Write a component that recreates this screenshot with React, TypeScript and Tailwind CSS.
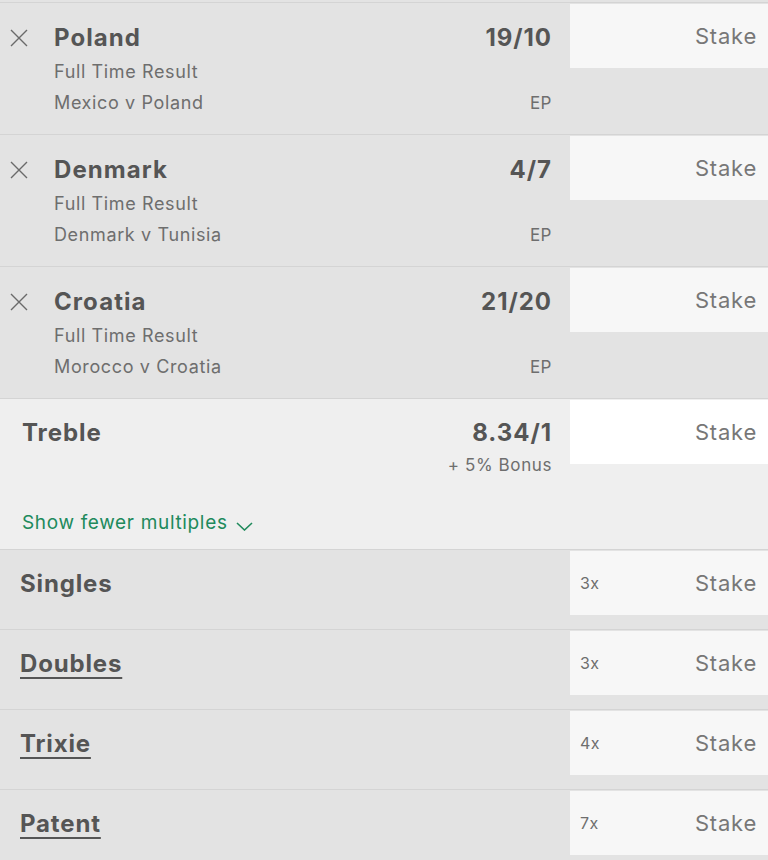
import React from "react";

const font = { fontFamily: "Inter, 'Noto Sans', sans-serif" };

function XIcon() {
  return (
    <svg width="18" height="18" viewBox="0 0 18 18" className="block">
      <path d="M1 1 L17 17 M17 1 L1 17" stroke="#6a6a6a" strokeWidth="1.4" fill="none" />
    </svg>
  );
}

function Chevron() {
  return (
    <svg width="17" height="9" viewBox="0 0 17 9" className="inline-block ml-[8px] mt-[6px]">
      <path d="M1 1 L8.5 8 L16 1" stroke="#208a5c" strokeWidth="1.6" fill="none" />
    </svg>
  );
}

const selections = [
  { team: "Poland", odds: "19/10", match: "Mexico v Poland" },
  { team: "Denmark", odds: "4/7", match: "Denmark v Tunisia" },
  { team: "Croatia", odds: "21/20", match: "Morocco v Croatia" },
];

const multiples = [
  { name: "Singles", count: "3x", underline: false },
  { name: "Doubles", count: "3x", underline: true },
  { name: "Trixie", count: "4x", underline: true },
  { name: "Patent", count: "7x", underline: true },
];

function Selection({ team, odds, match }: { team: string; odds: string; match: string }) {
  return (
    <div className="flex h-[132px] border-t border-[#d4d4d4] bg-[#e3e3e3]">
      <div className="w-[54px] shrink-0 pl-[10px] pt-[26px]">
        <XIcon />
      </div>
      <div className="flex-1 flex flex-col">
        <div className="h-[32px] mt-[19px] text-[24px] leading-[32px] font-bold tracking-[0.045em] text-[#555555]">{team}</div>
        <div className="mt-[5px] text-[18px] leading-[26px] tracking-[0.035em] text-[#6e6e6e]">Full Time Result</div>
        <div className="mt-[5px] text-[18px] leading-[26px] tracking-[0.035em] text-[#6e6e6e]">{match}</div>
      </div>
      <div className="flex flex-col items-end pr-[18px]">
        <div className="h-[32px] mt-[19px] text-[24px] leading-[32px] font-bold tracking-[0.04em] text-[#555555]">{odds}</div>
        <div className="mt-[36px] text-[17px] leading-[26px] tracking-[0.03em] text-[#6e6e6e]">EP</div>
      </div>
      <div className="w-[198px] h-[64px] mt-[1px] bg-[#f7f7f7] flex items-center justify-end pr-[11px] text-[22px] tracking-[0.035em] text-[#777777]">
        Stake
      </div>
    </div>
  );
}

function Multiple({ name, count, underline }: { name: string; count: string; underline: boolean }) {
  return (
    <div className="flex h-[80px] border-t border-[#d4d4d4] bg-[#e3e3e3]">
      <div className="flex-1 pl-[20px] pt-[18px]">
        <span
          className={
            "text-[24px] leading-[32px] font-bold tracking-[0.035em] text-[#555555] " +
            (underline ? "underline decoration-[2px] underline-offset-[5px] decoration-[#555555]" : "")
          }
        >
          {name}
        </span>
      </div>
      <div className="w-[198px] h-[64px] mt-[1px] bg-[#f7f7f7] flex items-center pl-[10px] pr-[11px]">
        <span className="text-[16px] tracking-[0.03em] text-[#6e6e6e]">{count}</span>
        <span className="ml-auto text-[22px] tracking-[0.035em] text-[#777777]">Stake</span>
      </div>
    </div>
  );
}

export default function App() {
  return (
    <div style={font} className="w-[768px] h-[860px] overflow-hidden bg-[#e3e3e3] pt-[2px]">
      {selections.map((s) => (
        <Selection key={s.team} {...s} />
      ))}
      <div className="h-[151px] border-t border-[#d4d4d4] bg-[#efefef] flex flex-col">
        <div className="flex">
          <div className="flex-1 pl-[22px] pt-[18px] text-[24px] leading-[32px] font-bold tracking-[0.04em] text-[#555555]">Treble</div>
          <div className="flex flex-col items-end pr-[18px] pt-[18px]">
            <div className="text-[24px] leading-[32px] font-bold tracking-[0.04em] text-[#555555]">8.34/1</div>
            <div className="text-[17px] leading-[24px] mt-[4px] tracking-[0.035em] text-[#6e6e6e]">+ 5% Bonus</div>
          </div>
          <div className="w-[198px] h-[64px] mt-[1px] bg-white flex items-center justify-end pr-[11px] text-[22px] tracking-[0.035em] text-[#777777]">
            Stake
          </div>
        </div>
        <div className="pl-[22px] mt-[33px] flex items-center text-[19px] leading-[26px] tracking-[0.035em] text-[#208a5c]">
          Show fewer multiples
          <Chevron />
        </div>
      </div>
      {multiples.map((m) => (
        <Multiple key={m.name} {...m} />
      ))}
    </div>
  );
}
